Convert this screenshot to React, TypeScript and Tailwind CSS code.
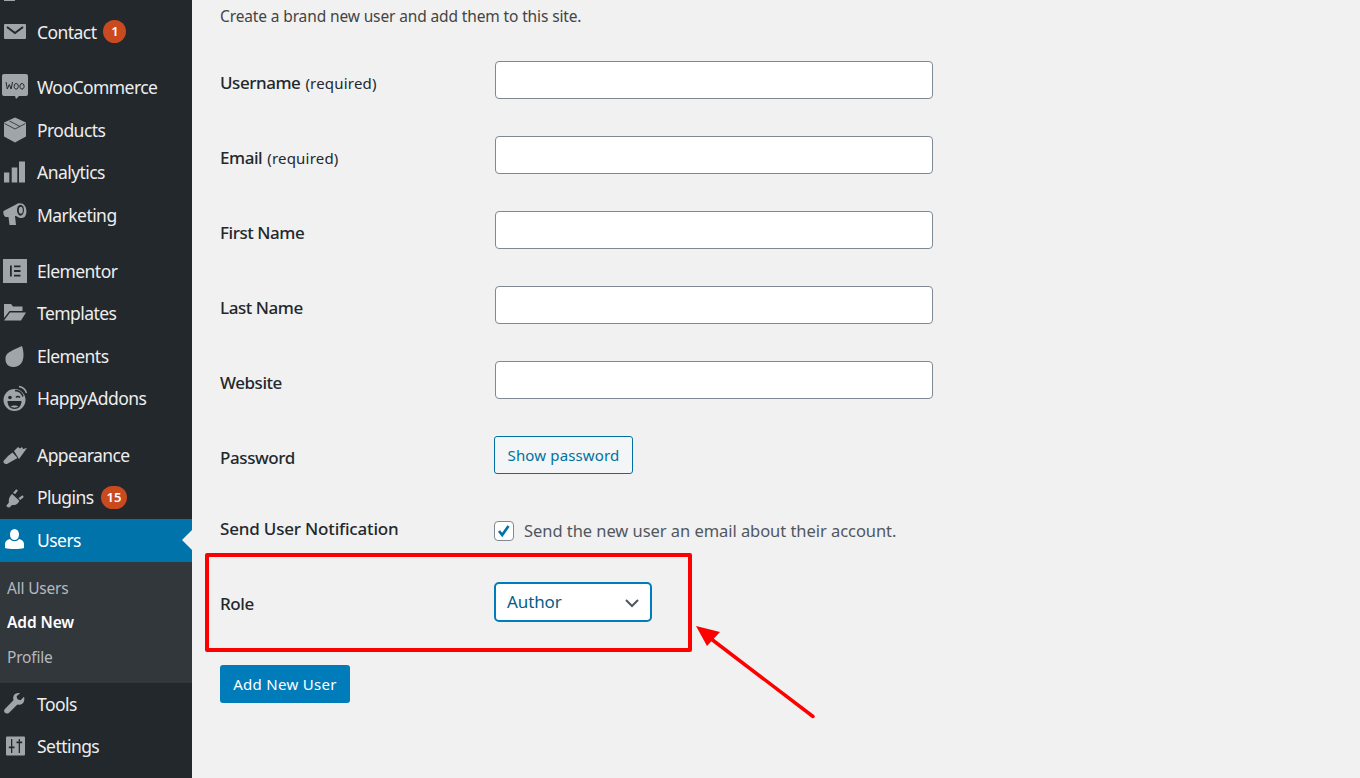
import type { ReactNode } from "react";

const Dash = ({ children }: { children: ReactNode }) => (
  <svg viewBox="0 0 24 24" className="w-6 h-6 shrink-0 fill-[#a0a5aa] overflow-visible">
    {children}
  </svg>
);

const icons: Record<string, ReactNode> = {
  contact: (
    <Dash>
      <rect x="1" y="4" width="22" height="15" rx="1" />
      <path d="M4 7l8 6 8-6" fill="none" stroke="#23282d" strokeWidth="2" />
    </Dash>
  ),
  woo: (
    <Dash>
      <path d="M1 -1h22a2 2 0 0 1 2 2v18a2 2 0 0 1-2 2h-7l-3 3-1-3H1a2 2 0 0 1-2-2V1a2 2 0 0 1 2-2z" />
      <path d="M3 7l1.300 7 2-4.500 1.800 4.500 1.400-7M13.200 8.500a2.100 2.800 0 1 0 .01 0zM19 8.500a2.100 2.800 0 1 0 .01 0z" fill="none" stroke="#23282d" strokeWidth="1" />
    </Dash>
  ),
  products: (
    <Dash>
      <path d="M12 -.5l11 5v14l-11 6-11-6v-14z" />
      <path d="M1.500 5.500L12 11l10.500-5.500M6.500 3L17 8.500" fill="none" stroke="#23282d" strokeWidth="0.800" />
    </Dash>
  ),
  analytics: (
    <Dash>
      <path d="M1 12.500h5.300v10H1zM8.700 7.500h5.600v15H8.700zM16 1.500h6v21h-6z" />
    </Dash>
  ),
  marketing: (
    <Dash>
      <path d="M.5 8L13 1.500C15 0 20-.5 22 3c2 3 2 9-.5 11-2.500 2-5.500 1-8.500-1h-1l1 9H6.500l-1-8h-3C.5 12.500 0 10 .5 8z" />
      <ellipse cx="17.500" cy="7.200" rx="3.500" ry="5.500" fill="#23282d" />
      <ellipse cx="17.800" cy="7.200" rx="2" ry="3.500" />
    </Dash>
  ),
  elementor: (
    <Dash>
      <path d="M0 0h24v24H0z" />
      <path d="M7 6.500h1.800v11H7zM11 6.500h6.500v1.800H11zM11 11.100h6.500v1.800H11zM11 15.700h6.500v1.800H11z" fill="#23282d" />
    </Dash>
  ),
  templates: (
    <Dash>
      <path d="M1 2h7l2 2.500h9.500v4.500H6.500L1 16z" />
      <path d="M7 10.500h16L18 18.500H1z" />
    </Dash>
  ),
  elements: (
    <Dash>
      <path d="M19 2c2 6 2 12 0 16-2 4-6 5-9 5-5 0-8-4-7.500-9C3 9 7 8 10 6c3-1 6-3 9-4z" />
    </Dash>
  ),
  happy: (
    <Dash>
      <circle cx="11.500" cy="13" r="11" />
      <path d="M12 3.500c4 .2 7 2.500 8 6" fill="none" stroke="#23282d" strokeWidth="1.500" />
      <path d="M16 -.5c3.500.5 6.500 3 7.500 6.500" fill="none" stroke="#a0a5aa" strokeWidth="1.500" />
      <circle cx="7" cy="10.500" r="1.800" fill="#23282d" />
      <path d="M13 10.500c1-1.500 3-1.500 4 0" fill="none" stroke="#23282d" strokeWidth="1.500" />
      <path d="M4.500 14h14c0 5-3 8-7 8s-7-3-7-8z" fill="#23282d" />
      <path d="M7.500 19.500c2-1.500 6-1.500 8 0-2 1.500-6 1.500-8 0z" />
    </Dash>
  ),
  appearance: (
    <Dash>
      <path d="M11 8l4-4 2 1.500L19 4l1 2 4-1-8 11z" />
      <path d="M9.500 9.500l5 5.500-3.500 2-7 4c-2 .5-4-1-3.500-3L5 13z" />
    </Dash>
  ),
  plugins: (
    <Dash>
      <g transform="translate(1 2) scale(.9 .85)">
        <path d="M9 7l8 8c-1 3-3 5-6 5l-2 0-3 3-2-.5L2.500 21l3-4c-.5-2 0-7 3.500-10z" />
        <path d="M10 6l3.500-4.500 2 1.500-3 4zM16 12l4.500-3.500 1.500 2-4 3.500z" />
      </g>
    </Dash>
  ),
  users: (
    <svg viewBox="0 0 24 24" className="w-6 h-6 shrink-0 fill-white">
      <ellipse cx="11.500" cy="6.500" rx="4.500" ry="5.500" />
      <path d="M7 11c1 1.500 2.800 2.200 4.500 2.200s3.500-.7 4.500-2.200c3 .5 5 2.500 5 5v4c-2 .8-6 1-9.500 1S4 20.800 2 20v-4c0-2.500 2-4.500 5-5z" />
    </svg>
  ),
  tools: (
    <Dash>
      <g transform="translate(.8 1.300) scale(.88 .86)">
        <path d="M23 4l-4 4-3.500-1L14.500 3.500 18.500 0c-3-.8-6.500.5-7.500 3.500-.5 1.500-.5 3 0 4.500L1.500 18c-1.500 1.500-1.500 3.500-.2 4.700s3.300 1.200 4.700-.2l9.500-9.500c2 .6 4 .3 5.500-.8 2-1.500 3-5 2-8.200z" />
      </g>
    </Dash>
  ),
  settings: (
    <Dash>
      <rect x="3" y="2.500" width="19" height="19" rx="1" />
      <path d="M8 5h1.300v7.500H8zM5.800 12.500h5.700v1.700H5.800zM8 14.200h1.300V19H8zM15.700 5h1.300v2.500h-1.300zM13.500 7.500h5.700v1.700h-5.700zM15.700 9.200h1.300V19h-1.300z" fill="#23282d" />
    </Dash>
  ),
};

const MenuItem = ({ icon, label, badge, active }: { icon: string; label: string; badge?: string; active?: boolean }) => (
  <div className={`relative flex items-center h-[42.5px] pl-[3px] ${active ? "bg-[#0073aa] text-white" : "text-[#eeeeee]"}`}>
    <div className="w-[34px] flex justify-start">{icons[icon]}</div>
    <span className="text-[17.5px] tracking-[-0.55px]">{label}</span>
    {badge && (
      <span className="ml-[7px] h-[23px] min-w-[23px] px-[6px] rounded-full bg-[#ca4a1f] text-white text-[13px] font-semibold flex items-center justify-center">
        {badge}
      </span>
    )}
    {active && (
      <span className="absolute right-0 top-[11px] w-0 h-0 border-y-[10px] border-y-transparent border-r-[10px] border-r-[#f1f1f1]" />
    )}
  </div>
);

const Sidebar = () => (
  <aside className="relative w-[192px] shrink-0 bg-[#23282d] pt-[10.5px] flex flex-col">
    <span className="absolute left-[4px] top-0 w-[11px] h-[1px] bg-[#a0a5aa]" />
    <MenuItem icon="contact" label="Contact" badge="1" />
    <div className="h-[13px]" />
    <MenuItem icon="woo" label="WooCommerce" />
    <MenuItem icon="products" label="Products" />
    <MenuItem icon="analytics" label="Analytics" />
    <MenuItem icon="marketing" label="Marketing" />
    <div className="h-[13.75px]" />
    <MenuItem icon="elementor" label="Elementor" />
    <MenuItem icon="templates" label="Templates" />
    <MenuItem icon="elements" label="Elements" />
    <MenuItem icon="happy" label="HappyAddons" />
    <div className="h-[14px]" />
    <MenuItem icon="appearance" label="Appearance" />
    <MenuItem icon="plugins" label="Plugins" badge="15" />
    <div className="h-[0.25px]" />
    <MenuItem icon="users" label="Users" active />
    <div className="bg-[#32373c] h-[121px] pl-[7px] pt-[10px] flex flex-col text-[15.500px] tracking-[-0.2px]">
      <span className="h-[35px] flex items-center text-[#b4b9be]">All Users</span>
      <span className="h-[33px] flex items-center text-white font-semibold tracking-[-0.1px]">Add New</span>
      <span className="h-[36px] flex items-center text-[#b4b9be]">Profile</span>
    </div>
    <MenuItem icon="tools" label="Tools" />
    <MenuItem icon="settings" label="Settings" />
  </aside>
);

const Field = ({ label, note }: { label: string; note?: string }) => (
  <div className="flex items-center h-[38px] mb-[37px]">
    <div className="w-[275px] pt-[5px] text-[17px] font-medium tracking-[-0.45px] text-[#23282d]">
      {label}
      {note && <span className="ml-[5px] text-[15px] font-normal tracking-[0.2px]">{note}</span>}
    </div>
    <input className="w-[438px] h-[38px] bg-white border border-[#7e8993] rounded-[4px]" />
  </div>
);

export default function App() {
  return (
    <div className="relative flex h-[778px] w-[1360px] overflow-hidden bg-[#f1f1f1] font-['Noto_Sans',sans-serif]">
      <Sidebar />
      <main className="flex-1 pl-[28px] pt-[5px] flex flex-col">
        <p className="h-[56px] text-[15.500px] tracking-[-0.13px] text-[#444]">Create a brand new user and add them to this site.</p>
        <Field label="Username" note="(required)" />
        <Field label="Email" note="(required)" />
        <Field label="First Name" />
        <Field label="Last Name" />
        <Field label="Website" />

        <div className="flex items-center h-[38px] mb-[37px]">
          <div className="w-[274px] pt-[5px] text-[17px] font-medium tracking-[-0.4px] text-[#23282d]">Password</div>
          <button className="w-[139px] h-[38px] border border-[#0071a1] rounded-[3px] bg-[#f3f5f6] text-[#0071a1] text-[15px] tracking-[0.15px]">
            Show password
          </button>
        </div>

        <div className="flex items-center h-[38px] mb-[33px]">
          <div className="w-[274px] text-[17px] font-medium tracking-[-0.18px] text-[#23282d] -mt-[2px]">Send User Notification</div>
          <div className="flex items-center gap-[10px] text-[#50575e] text-[16.500px] tracking-[-0.05px] mt-[2px]">
            <span className="w-[20px] h-[20px] border border-[#7e8993] rounded-[4px] bg-white flex items-center justify-center">
              <svg viewBox="0 0 20 20" className="w-[20px] h-[20px]">
                <path d="M4.500 10l3.500 4.500L15 4.500" fill="none" stroke="#0073aa" strokeWidth="3" />
              </svg>
            </span>
            Send the new user an email about their account.
          </div>
        </div>

        <div className="flex items-center h-[40px] mb-[43px]">
          <div className="w-[274px] pt-[4px] text-[17px] font-medium tracking-[-0.4px] text-[#23282d]">Role</div>
          <div className="relative w-[158px] h-[40px] border-2 border-[#007cba] rounded-[5px] bg-white pl-[11px] flex items-center text-[#016087] text-[17px] tracking-[-0.1px]">
            Author
            <svg viewBox="0 0 16 16" className="absolute right-[10px] top-[11px] w-[16px] h-[16px]">
              <path d="M2 5l6 6 6-6" fill="none" stroke="#50575e" strokeWidth="2" />
            </svg>
          </div>
        </div>

        <button className="w-[130px] h-[38px] rounded-[3px] bg-[#007cba] text-white text-[15px] tracking-[0.3px]">Add New User</button>
      </main>

      {/* annotation */}
      <div className="absolute left-[205px] top-[553px] w-[487px] h-[99px] border-4 border-[#ff0000] rounded-[2px]" />
      <svg className="absolute left-[690px] top-[620px] w-[130px] h-[102px]" viewBox="0 0 130 102">
        <path d="M123 96.500L16 15" stroke="#ff0000" strokeWidth="3.500" fill="none" strokeLinecap="round" />
        <path d="M6 6l11 20 13-14z" fill="#ff0000" />
      </svg>
    </div>
  );
}
